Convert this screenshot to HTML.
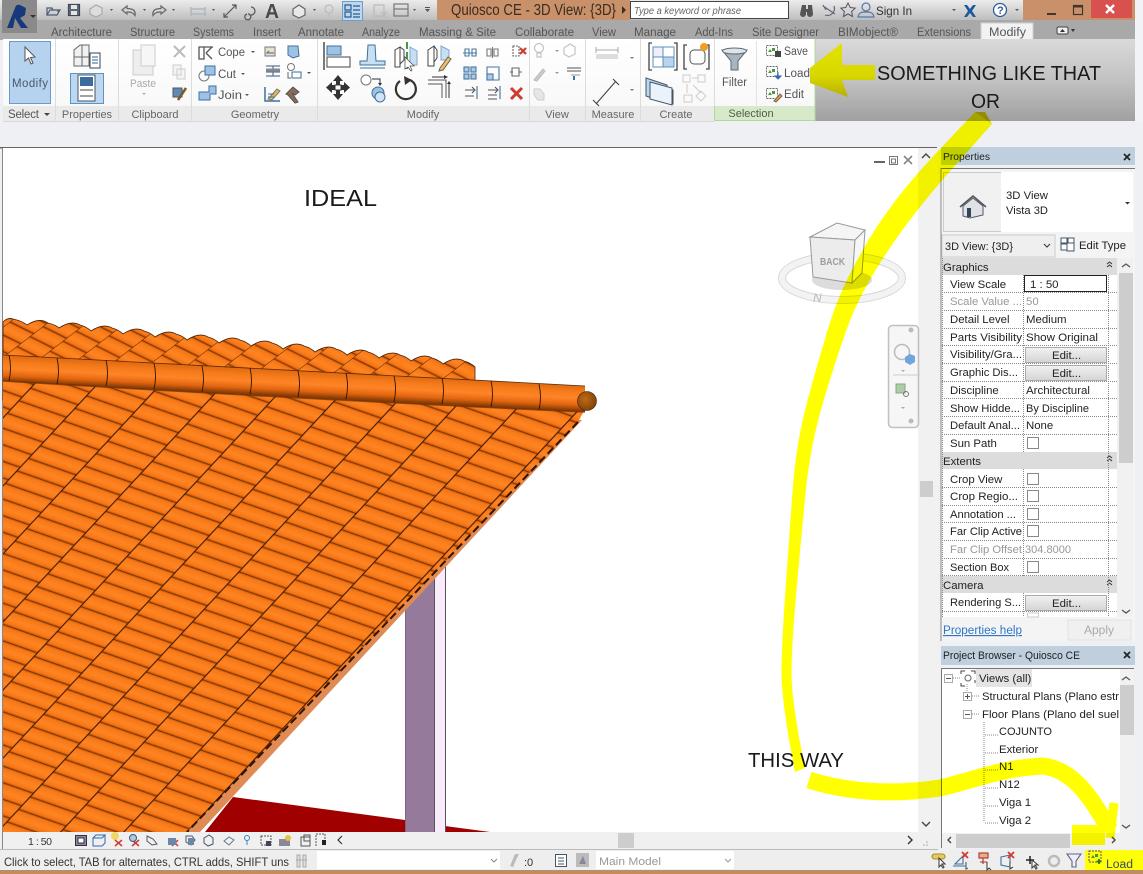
<!DOCTYPE html>
<html><head><meta charset="utf-8"><title>Quiosco CE - 3D View</title>
<style>
html,body{margin:0;padding:0;background:#fff}
body{width:1143px;height:874px;overflow:hidden}
svg{display:block;font-family:"Liberation Sans",sans-serif}
text{fill:#333;font-size:11px}
.t{fill:#555;font-size:11.5px}
.l{fill:#666;font-size:11px;text-anchor:middle}
.p{font-size:11.4px;fill:#222}
.g{fill:#999}
.big{font-size:20px;fill:#1a1a1a}
.ic{fill:none;stroke:#4b5d70;stroke-width:1.2}
.bl{fill:#9cc3e6;stroke:#3f6f9c;stroke-width:1}
.lg{fill:none;stroke:#c4c4c4;stroke-width:1.2}
.dot{stroke:#888;stroke-width:1;stroke-dasharray:1 1;fill:none}
</style></head><body>
<svg width="1143" height="874" viewBox="0 0 1143 874" xmlns="http://www.w3.org/2000/svg">
<defs>
<linearGradient id="tb" x1="0" y1="0" x2="0" y2="1"><stop offset="0" stop-color="#ececec"/><stop offset="1" stop-color="#b9b9b9"/></linearGradient>
<linearGradient id="rg" x1="0" y1="0" x2="0" y2="1"><stop offset="0" stop-color="#dadada"/><stop offset=".5" stop-color="#c2c2c2"/><stop offset="1" stop-color="#a0a0a0"/></linearGradient>
<linearGradient id="rb" x1="0" y1="0" x2="0" y2="1"><stop offset="0" stop-color="#ffffff"/><stop offset="1" stop-color="#f7f7f7"/></linearGradient>
<linearGradient id="ar" x1="0" y1="0" x2="0" y2="1"><stop offset="0" stop-color="#e2e200"/><stop offset=".6" stop-color="#d8d800"/><stop offset="1" stop-color="#b8b000"/></linearGradient>
<linearGradient id="btn" x1="0" y1="0" x2="0" y2="1"><stop offset="0" stop-color="#f2f2f2"/><stop offset="1" stop-color="#d4d4d4"/></linearGradient>
<linearGradient id="tileG" gradientUnits="userSpaceOnUse" x1="0" y1="0" x2="-47.4" y2="65.9" spreadMethod="repeat">
<stop offset="0" stop-color="#5a2a08"/><stop offset=".05" stop-color="#d9640e"/><stop offset=".14" stop-color="#f77716"/><stop offset=".55" stop-color="#ff8522"/><stop offset=".86" stop-color="#f77514"/><stop offset=".95" stop-color="#cc5a0a"/><stop offset="1" stop-color="#5a2a08"/>
</linearGradient>
<pattern id="tile" patternUnits="userSpaceOnUse" width="100" height="100" patternTransform="matrix(.56 .077 -.116 .125 287.3 451.7)">
<rect width="100" height="100" fill="url(#tileG)"/><rect width="1.200" height="100" fill="#3a1a08"/><rect x="98.800" width="1.200" height="100" fill="#3a1a08"/>
</pattern>
<pattern id="far" patternUnits="userSpaceOnUse" width="100" height="100" patternTransform="matrix(.33 .046 -.13 .1 10 322)">
<rect width="100" height="100" fill="url(#tileG)"/><rect width="1" height="100" fill="#4a2208"/><rect x="99" width="1" height="100" fill="#4a2208"/>
</pattern>
<linearGradient id="ridge" gradientUnits="userSpaceOnUse" x1="300" y1="369" x2="298.6" y2="396"><stop offset="0" stop-color="#d9640e"/><stop offset=".3" stop-color="#f47a1a"/><stop offset=".55" stop-color="#ff8426"/><stop offset=".8" stop-color="#e3660f"/><stop offset="1" stop-color="#8a3c06"/></linearGradient>
<radialGradient id="ball" cx=".4" cy=".4" r=".7"><stop offset="0" stop-color="#c06a14"/><stop offset="1" stop-color="#7a3e08"/></radialGradient>
</defs>

<!-- base -->
<rect width="1143" height="874" fill="#eef0f3"/>
<!-- title bar -->
<rect width="1135" height="22" fill="url(#tb)"/>
<rect x="437" y="0" width="193" height="20" fill="#c9916a"/>
<rect x="1023" y="0" width="112" height="20" fill="#c9916a"/>
<rect x="1091" y="0" width="41" height="18" fill="#d8514f"/>
<path d="M1106 5l8 8m0-8l-8 8" stroke="#fff" stroke-width="2.4"/>
<rect x="1047" y="13" width="9" height="2" fill="#40362e"/>
<rect x="1073.500" y="5.500" width="9" height="9" fill="none" stroke="#40362e" stroke-width="1.2"/><rect x="1073" y="5" width="10" height="2.500" fill="#40362e"/>
<!-- tabs band -->
<rect y="20" width="1135" height="20" fill="#a9a9a9"/>
<rect x="1135" width="8" height="130" fill="#f1f3f6"/>
<rect x="981" y="23" width="52" height="18" fill="#f2f2f2" stroke="#d0d0d0"/>
<!-- logo -->
<rect x="2" y="0" width="35" height="33" fill="#8a8a8a"/>
<path d="M7 28L15 8Q16 4 20 5L26 8 25 15 20 18 28 28H21L15 18 13 28z" fill="#17387a"/>
<path d="M30 15h6l-3 3z" fill="#333"/>
<!-- QAT -->
<g class="ic">
<path d="M47 15V8h5l1 2h5v2M47 15l3-5h10l-3 5z"/>
<rect x="68.500" y="4.500" width="11" height="11" fill="#5d6a78" stroke="#3d4855"/><rect x="71" y="5" width="6" height="4" fill="#e5e5e5" stroke="none"/><rect x="71" y="11" width="6" height="4" fill="#e5e5e5" stroke="none"/>
<path d="M90 9l6-4 6 3v6l-6 3-6-3z" stroke="#aaa" fill="#ddd"/>
<path d="M122 10l5-4v2.500c6 0 9 2 8 7-2-3-4-3.500-8-3.500V14z" stroke="#666"/>
<path d="M166 10l-5-4v2.500c-6 0-9 2-8 7 2-3 4-3.500 8-3.500V14z" stroke="#666"/>
<path d="M191 7v9M205 7v9M191 9h14M191 14h14" stroke="#a9b3bd"/>
<path d="M224 17l12-12M224 13v4h4M236 9V5h-4" stroke="#555"/>
<path d="M247 14a3 3 0 1 0 1-.1M251 7a4 4 0 1 1 0 8" stroke="#555"/>
<path d="M293 9l6-4 6 4v6l-6 3-6-3z" stroke="#666" fill="#e8e8e8"/>
<circle cx="329" cy="9" r="4" stroke="#bbb"/><path d="M329 13v4" stroke="#bbb"/>
<rect x="374" y="5" width="10" height="11" stroke="#bbb"/><path d="M381 12l6 6m0-6l-6 6" stroke="#bbb"/>
<rect x="394" y="4" width="14" height="12" stroke="#777"/><path d="M394 9h14" stroke="#777"/>
</g>
<rect x="342.500" y="1.500" width="20" height="19" fill="#bcd8f0" stroke="#6d9dc8"/>
<path d="M345 5h6v5h-6zM345 12h6v5h-6zM353 6h7M353 10h7M353 14h7M353 17h7" fill="none" stroke="#2d5c8a" stroke-width="1.200"/>
<text x="265" y="18" style="font-size:20px;font-weight:bold;fill:#4a4a4a" textLength="14" lengthAdjust="spacingAndGlyphs">A</text>
<g fill="#555"><path d="M110 9h3l-1.500 2zM143 9h3l-1.500 2zM172 9h3l-1.500 2zM212 9h3l-1.500 2zM313 9h3l-1.500 2zM413 9h3l-1.500 2zM425 7h5v1h-5zM425 9h5l-2.500 3z"/></g>
<text x="451" y="15" style="font-size:15.500px;fill:#3a2c20" textLength="165" lengthAdjust="spacingAndGlyphs">Quiosco CE - 3D View: {3D}</text>
<path d="M622 6l4 4-4 4z" fill="#332"/>
<rect x="630.500" y="1.500" width="158" height="17" fill="#fff" stroke="#444"/>
<text x="634" y="14" style="font-size:10px;font-style:italic;fill:#666" textLength="107" lengthAdjust="spacingAndGlyphs">Type a keyword or phrase</text>
<!-- right icons -->
<path d="M802 5h4v4h2V5h4l1 9a3 3 0 0 1-6 0v-2h-1v2a3 3 0 0 1-6 0z" fill="#555"/>
<path d="M823 6l12 8M825 15a7 7 0 0 0 9-9M823 5l3 5" fill="none" stroke="#667" stroke-width="1.200"/>
<path d="M848 3l2.200 4.500 5 .6-3.600 3.400 1 5-4.600-2.500-4.600 2.500 1-5-3.600-3.400 5-.6z" fill="none" stroke="#556" stroke-width="1"/>
<circle cx="866" cy="7" r="4" fill="none" stroke="#5577aa" stroke-width="1.200"/><path d="M858 17c1-5 4-5 8-5s7 0 8 5z" fill="none" stroke="#5577aa" stroke-width="1.200"/>
<text x="876" y="15" style="font-size:12px;fill:#333" textLength="36" lengthAdjust="spacingAndGlyphs">Sign In</text>
<path d="M952 9h4l-2 2z" fill="#555"/>
<path d="M964 5h3l3 4 3-4h3l-4 6 4 6h-3l-3-4-3 4h-3l4-6z" fill="#1d5a9c"/>
<circle cx="1000" cy="10" r="6.500" fill="#fff" stroke="#2c5e9c" stroke-width="1.300"/><text x="997" y="14" style="font-size:11px;font-weight:bold;fill:#2c5e9c">?</text>
<path d="M1015 9h4l-2 2z" fill="#555"/>
<rect x="1057" y="27" width="11" height="7" rx="1.500" fill="#eee" stroke="#444"/><path d="M1060 32l2.500-3 2.500 3z" fill="#333"/><path d="M1071 29h4l-2 3z" fill="#333"/>
<!-- tabs -->
<g>
<text class="t" x="51" y="36" textLength="61" lengthAdjust="spacingAndGlyphs">Architecture</text><text class="t" x="130" y="36" textLength="45" lengthAdjust="spacingAndGlyphs">Structure</text><text class="t" x="193" y="36" textLength="41" lengthAdjust="spacingAndGlyphs">Systems</text><text class="t" x="253" y="36" textLength="28" lengthAdjust="spacingAndGlyphs">Insert</text><text class="t" x="298" y="36" textLength="46" lengthAdjust="spacingAndGlyphs">Annotate</text><text class="t" x="362" y="36" textLength="38" lengthAdjust="spacingAndGlyphs">Analyze</text><text class="t" x="419" y="36" textLength="77" lengthAdjust="spacingAndGlyphs">Massing &amp; Site</text><text class="t" x="515" y="36" textLength="59" lengthAdjust="spacingAndGlyphs">Collaborate</text><text class="t" x="592" y="36" textLength="24" lengthAdjust="spacingAndGlyphs">View</text><text class="t" x="634" y="36" textLength="42" lengthAdjust="spacingAndGlyphs">Manage</text><text class="t" x="695" y="36" textLength="38" lengthAdjust="spacingAndGlyphs">Add-Ins</text><text class="t" x="752" y="36" textLength="67" lengthAdjust="spacingAndGlyphs">Site Designer</text><text class="t" x="838" y="36" textLength="60" lengthAdjust="spacingAndGlyphs">BIMobject®</text><text class="t" x="917" y="36" textLength="54" lengthAdjust="spacingAndGlyphs">Extensions</text><text class="t" x="989" y="36" textLength="37" lengthAdjust="spacingAndGlyphs">Modify</text>
</g>
<!-- ribbon -->
<rect x="815" y="39" width="320" height="82" fill="url(#rg)"/>
<rect x="3" y="39" width="812" height="82" fill="url(#rb)"/>
<rect x="3" y="106" width="711" height="15" fill="#eaeaea"/>
<rect x="714" y="106" width="101" height="15" fill="#d6e9c8"/>
<path d="M714.500 39v81.500h100.500V39" fill="none" stroke="#b6d69e"/>
<path d="M3 121.500h711" stroke="#d8d8d8"/>
<g stroke="#dcdcdc"><path d="M55.500 39v82M118.500 39v82M191.500 39v82M317.500 39v82M529.500 39v82M585.500 39v82M640.500 39v82M714.500 39v67"/></g>
<path d="M756.500 41v65" stroke="#e2e2e2"/>
<!-- modify button -->
<rect x="9.500" y="41.500" width="41" height="62" fill="#b5d3ef" stroke="#6b9cc9"/>
<path d="M25 47v14l3.500-3 2.500 6 2-1-2.500-5.500 4.500-.5z" fill="#fff" stroke="#555"/>
<text x="12" y="87" style="font-size:11.500px;fill:#4a5a68" textLength="36">Modify</text>
<!-- labels -->
<text x="8" y="118" class="t" textLength="31">Select</text><path d="M44 113h6l-3 3z" fill="#444"/>
<text class="l" x="87" y="118">Properties</text><text class="l" x="155" y="118">Clipboard</text><text class="l" x="255" y="118">Geometry</text><text class="l" x="423" y="118">Modify</text><text class="l" x="557" y="118">View</text><text class="l" x="613" y="118">Measure</text><text class="l" x="676" y="118">Create</text><text class="l" x="751" y="117" style="fill:#4f5f48">Selection</text>
<!-- properties icons -->
<g fill="#f1f1f1" stroke="#666" stroke-width="1"><path d="M74 50l6-5h9v21h-15z"/><path d="M74 57h15M82 45v21"/><rect x="90" y="53" width="10" height="15" fill="#fff" stroke="#345"/></g>
<path d="M92 57h6M92 60h6M92 63h6" stroke="#2d6090"/>
<rect x="70.500" y="73.500" width="33" height="30" fill="#bcd7ef" stroke="#5f93c2"/>
<rect x="78" y="75" width="17" height="26" fill="#fff" stroke="#456"/><rect x="80" y="77" width="13" height="9" fill="#3a6c9c"/><path d="M80 90h13M80 96h13" stroke="#444"/>
<!-- clipboard -->
<g fill="#eee" stroke="#ccc"><path d="M133 50h20v25h-20z"/><rect x="141" y="45" width="14" height="21" fill="#f6f6f6"/></g>
<text x="130" y="87" style="font-size:11px;fill:#aaa" textLength="26" lengthAdjust="spacingAndGlyphs">Paste</text><path d="M142 93h4l-2 2z" fill="#aaa"/>
<path d="M174 46l11 11M185 46l-11 11" stroke="#bbb" stroke-width="2"/>
<path d="M173 65h8v10h-8zM177 69h8v10h-8z" fill="#f4f4f4" stroke="#ccc"/>
<path d="M173 88h9v9h-9z" fill="#5f8ab5" stroke="#555"/><path d="M178 100l8-12" stroke="#7a5a30" stroke-width="2.500"/>
<!-- geometry -->
<g>
<path d="M199 47h5v12h-5zM201 47l12 0M206 53l6-6M206 53l6 6" fill="none" stroke="#555" stroke-width="1.300"/>
<text x="218" y="56" class="t" textLength="27" lengthAdjust="spacingAndGlyphs">Cope</text><text x="218" y="78" class="t" textLength="18" lengthAdjust="spacingAndGlyphs">Cut</text><text x="218" y="99" class="t" textLength="24" lengthAdjust="spacingAndGlyphs">Join</text>
<path d="M251 51h4l-2 2zM241 73h4l-2 2zM245 94h4l-2 2z" fill="#555"/>
<circle cx="204" cy="76" r="5" fill="none" stroke="#777"/><rect x="205" y="66" width="10" height="9" class="bl"/>
<path d="M199 92h10v-6h7v8h-6v6h-11z" class="bl"/>
<path d="M265 47h10v9h-10z" fill="#e8e1c8" stroke="#777"/><path d="M274 53h-7l2-2" stroke="#3a6c9c" fill="none"/>
<path d="M288 46h10l1 10-6 2-5-3z" class="bl"/>
<path d="M266 66h14M266 72h14M266 76h14M273 66v10" stroke="#5a7a9a" stroke-width="1.300"/><path d="M266 70h14" stroke="#888" stroke-width="3"/>
<circle cx="291" cy="67" r="3.500" fill="none" stroke="#777"/><rect x="292" y="72" width="9" height="6" fill="none" stroke="#3f6f9c"/><path d="M288 72v6h3" fill="none" stroke="#666"/><path d="M307 72h4l-2 2z" fill="#555"/>
<path d="M265 87v14h15" fill="none" stroke="#3f6f9c" stroke-width="1.500"/><path d="M268 99l9-10 3 2-8 9z" fill="#e5b94f" stroke="#777"/><path d="M268 94h6M268 97h6" stroke="#3f6f9c"/>
<path d="M286 94l7-7 6 5-4 3-3-2 6 9-3 1-7-8z" fill="#8a6a55" stroke="#555"/>
</g>
<!-- modify big icons -->
<g>
<path d="M324 42v28" stroke="#333" stroke-width="1.300"/><rect x="327" y="46" width="14" height="9" class="bl"/><rect x="327" y="57" width="23" height="10" fill="#fff" stroke="#444"/>
<path d="M360 65h25v-4h-9l-1-16h-7l-1 16h-7z" fill="#c7dff2" stroke="#3f6f9c"/><path d="M360 68h25" stroke="#3f6f9c"/>
<path d="M395 50l5-3v20h-5zM400 47l4 3v10l-4 4" fill="#fff" stroke="#444"/><path d="M407 42v30" stroke="#4a9a3c" stroke-width="2" stroke-dasharray="7 3"/><path d="M410 47l7 4v14h-7z" fill="#c7dff2" stroke="#7ea6c8"/><path d="M405 57v12l3-2 3 4 1-1-2-4h4z" fill="#fff" stroke="#555" stroke-width=".8"/>
<path d="M428 50l6-4v20h-6zM434 46l3 4v8l-3 4" fill="#fff" stroke="#444"/><path d="M441 46l8 4v10h-8z" fill="#c7dff2" stroke="#7ea6c8"/><path d="M440 68l8-11 3 2-8 11-4 1z" fill="#f0c060" stroke="#665"/>
<path d="M338 75l5 6h-3v4h4v-3l6 5.500-6 5.500v-3h-4v4h3l-5 6-5-6h3v-4h-4v3l-6-5.500 6-5.500v3h4v-4h-3z" fill="#333"/><rect x="335" y="85" width="6" height="5" fill="#fff" stroke="#333"/>
<circle cx="366" cy="80" r="5" fill="#fff" stroke="#777"/><circle cx="378" cy="93" r="6" class="bl"/><circle cx="380" cy="97" r="5" fill="#cfe3f4" stroke="#3f6f9c"/><path d="M372 79h8v5" fill="none" stroke="#333"/><path d="M378 83h4l-2 3z" fill="#333"/>
<path d="M400 81a10 10 0 1 0 10-1" fill="none" stroke="#333" stroke-width="2.200"/><path d="M404 76l8 4-7 5z" fill="#333"/>
<path d="M428 80h18v18M428 84h14v14" fill="none" stroke="#555"/><path d="M432 77h12M449 98V84" stroke="#333"/><path d="M444 75l4 2-4 2zM447 84l2-3 2 3z" fill="#333"/>
</g>
<!-- modify small -->
<g stroke="#4a76a0" fill="none" stroke-width="1.100">
<path d="M465 49h4v7h-4zM472 49h4v7h-4zM463 53h14"/><path d="M487 49h4v7h-4zM494 49h4v7h-4zM492.500 47v11" stroke="#777"/>
<path d="M513 46h6v10h-6z" stroke="#666" stroke-dasharray="2 1"/>
<rect x="464" y="67" width="5" height="5" fill="#a9cbe8"/><rect x="471" y="67" width="5" height="5" fill="#a9cbe8"/><rect x="464" y="74" width="5" height="5" fill="#a9cbe8"/><rect x="471" y="74" width="5" height="5" fill="#a9cbe8"/>
<path d="M487 67h12v13h-12z"/><rect x="487" y="74" width="6" height="6" fill="#a9cbe8"/>
<path d="M512 68h7v8h-7z" stroke="#666"/><path d="M510 72h3M519 72h3" stroke="#666"/>
<path d="M465 90h9M465 96h9M472 87l3 3-3 3" stroke="#555"/><path d="M477 86v13" stroke="#3f6f9c"/>
<path d="M488 90h9M488 95h9M488 99h9M495 87l3 3-3 3" stroke="#555"/><path d="M500 86v13" stroke="#3f6f9c"/>
</g>
<path d="M520 48l6 6m0-6l-6 6" stroke="#d03b30" stroke-width="2.200"/>
<path d="M511 88l11 11m0-11l-11 11" stroke="#d03b30" stroke-width="3"/>
<!-- view panel -->
<g class="lg"><circle cx="539" cy="48" r="4.500"/><path d="M537 53h4v4h-4z"/><path d="M564 48l6-4 5 3v7l-6 3-5-3z"/></g><path d="M555 50h4l-2 2zM555 72h4l-2 2z" fill="#999"/>
<path d="M534 80l9-11 2 2-8 10z" fill="#ccc" stroke="#bbb"/>
<path d="M567 68h14M567 71h14" stroke="#555"/><path d="M571 75h9" stroke="#999"/><path d="M574 76v4" stroke="#3f6f9c" stroke-width="2"/>
<path d="M534 89h6l4 5v6h-6l-4-5z" fill="#e6e6e6" stroke="#ccc"/>
<!-- measure -->
<path d="M596 50h22M596 47v6M618 47v6" stroke="#aaa"/><rect x="596" y="54" width="22" height="5" fill="#ddd"/><path d="M630 57h4l-2 2z" fill="#777"/>
<path d="M596 104l20-23M593 100l6 6M613 79l6 6" stroke="#444" stroke-width="1.100"/><path d="M630 89h4l-2 2z" fill="#777"/>
<!-- create -->
<g fill="none" stroke="#444" stroke-width="1.300"><path d="M652 43h-3v27h3M674 43h3v27h-3"/><path d="M687 45h-3v24h3M706 45h3v24h-3"/></g>
<rect x="653" y="47" width="21" height="20" fill="#fff" stroke="#5f8fb8"/><rect x="653" y="47" width="10" height="10" fill="#eef" stroke="#5f8fb8"/><rect x="663" y="57" width="11" height="10" fill="#b9d5ee" stroke="#5f8fb8"/>
<rect x="690" y="50" width="15" height="14" rx="4" fill="#fff" stroke="#555"/><circle cx="704" cy="47" r="4" fill="#f0a020"/>
<path d="M646 78l21 7v18l-21-7z" fill="#bcd7ef" stroke="#456"/><path d="M651 84l22 6v14l-22-6z" fill="#d8e9f7" stroke="#456"/><path d="M650 82l22 6v17l-22-6z" fill="#eaf3fb" stroke="#456"/>
<g fill="none" stroke="#ccc"><rect x="683" y="75" width="7" height="7"/><rect x="698" y="75" width="7" height="7"/><rect x="684" y="95" width="8" height="7"/><path d="M692 78h6M687 84v9M693 85l8 8"/><path d="M701 91l5 5-5 5-5-5z"/></g>
<!-- selection -->
<path d="M722 50h25l-9 11v9l-7 0v-9z" fill="#a9b6be" stroke="#5c6a74"/><ellipse cx="734.500" cy="51" rx="12" ry="3" fill="#dfe5e9" stroke="#5c6a74"/>
<text x="722" y="86" class="t" textLength="25" lengthAdjust="spacingAndGlyphs">Filter</text>
<g fill="none" stroke="#666" stroke-dasharray="2 1"><rect x="766.500" y="45.500" width="11" height="10"/><rect x="766.500" y="66.500" width="11" height="10"/><rect x="766.500" y="88.500" width="11" height="10"/></g>
<path d="M768 52l2-3 2 3zM772 48h3v3h-3zM768 73l2-3 2 3zM772 69h3v3h-3zM768 95l2-3 2 3zM772 91h3v3h-3z" fill="#4a9a3c"/>
<rect x="775" y="51" width="6" height="6" fill="#444"/><path d="M778 72v4M775 76h6l-3 3z" fill="#2d6ab0" stroke="#2d6ab0"/><path d="M774 101l6-7 2 2-6 6z" fill="#e8a030" stroke="#765"/>
<text x="784" y="55" class="t" textLength="24" lengthAdjust="spacingAndGlyphs">Save</text><text x="784" y="77" class="t" textLength="26" lengthAdjust="spacingAndGlyphs">Load</text><text x="784" y="98" class="t" textLength="20" lengthAdjust="spacingAndGlyphs">Edit</text>
<!-- ribbon notes -->
<path d="M810 68L842 43V65H875V80H842L848 97L810 83z" fill="url(#ar)"/>
<text x="877" y="80" class="big" textLength="224" lengthAdjust="spacingAndGlyphs">SOMETHING LIKE THAT</text>
<text x="971" y="108" class="big" textLength="29" lengthAdjust="spacingAndGlyphs">OR</text>

<!-- lower bg -->
<rect y="122" width="1143" height="26" fill="#eef0f3"/>
<rect y="147" width="937" height="1.500" fill="#666"/>
<!-- viewport -->
<rect x="3" y="148" width="915" height="684" fill="#fff"/>
<path d="M2.500 148v702" stroke="#888"/>
<rect x="918" y="148" width="20" height="700" fill="#f1f1f1"/>
<rect x="920" y="481" width="13" height="16" fill="#cdcdcd"/>
<path d="M922 158l4-4 4 4M922 822l4 4 4-4" fill="none" stroke="#444" stroke-width="1.400"/>
<path d="M874 162h11" stroke="#666" stroke-width="2"/><rect x="889.500" y="156.500" width="8" height="8" fill="none" stroke="#777"/><rect x="891.500" y="159" width="4" height="4" fill="none" stroke="#777"/><path d="M904 156l8 8m0-8l-8 8" stroke="#888" stroke-width="1.600"/>
<text x="304" y="206" style="font-size:23px;fill:#1a1a1a" textLength="73" lengthAdjust="spacingAndGlyphs">IDEAL</text>
<!-- red floor + column -->
<path d="M233 797L405 820V832H205z" fill="#a10000"/><path d="M445 826L490 832H445z" fill="#a10000"/>
<rect x="405" y="560" width="29" height="272" fill="#957a9c"/><rect x="434" y="560" width="11" height="272" fill="#f9eafc"/>
<path d="M434.500 560v272M445.500 560v272" stroke="#555" stroke-width="1"/><path d="M405.500 600v232" stroke="#7c6484"/>
<!-- far slope -->
<path d="M3 400V322q5-5 10-3 9 2 14 6 12-8 21-2 8 2 11 5q12-8 21-3 7 2 11 6 12-8 21-3 7 2 11 6 12-8 21-3 7 2 11 6 12-8 21-3 7 2 11 6 12-8 21-3 7 2 11 6 12-8 21-3 7 2 11 6 12-8 21-3 7 2 11 6 12-8 21-3 7 2 11 6 12-8 21-3 7 2 11 6 12-8 21-3 7 2 11 6 12-8 21-3 7 2 11 6 12-8 21-3 7 2 11 6 12-8 21-3 7 2 11 6V400z" fill="url(#far)" stroke="#4a2208" stroke-width=".8"/>
<!-- main roof -->
<path d="M582 420L200 832H187L578 420z" fill="#e08a54"/>
<path d="M3 368L590 400 578 422 187 832H3z" fill="url(#tile)"/>
<path d="M578 422L187 832" fill="none" stroke="#2e1408" stroke-width="2" stroke-dasharray="8 4"/>
<!-- ridge -->
<path d="M3 355L585 386V412Q300 399 3 381z" fill="url(#ridge)"/>
<path d="M3 355L585 386" stroke="#5a2a08" stroke-width=".8" fill="none"/>
<path d="M3 381Q300 399 585 412" stroke="#6a3006" stroke-width="1.600" fill="none" opacity=".7"/>
<g fill="none" stroke="#2e1506" stroke-width=".9">
<path d="M9 355q3 13 0 26M57 358q3 13 0 26M106 360q3 13 0 26M154 363q3 13 0 26M202 366q3 13 0 26M250 368q3 13 0 26M298 371q3 13 0 26M346 373q3 13 0 26M394 376q3 13 0 26M442 378q3 13 0 26M491 381q3 13 0 26M539 384q3 13 0 26"/></g>
<circle cx="587" cy="401" r="9.500" fill="url(#ball)" stroke="#3e1e06" stroke-width=".6"/>
<!-- view cube -->
<ellipse cx="842" cy="278" rx="60" ry="22" fill="none" stroke="#d8d8d8" stroke-width="8"/>
<ellipse cx="842" cy="278" rx="60" ry="22" fill="none" stroke="#f3f3f3" stroke-width="6"/>
<ellipse cx="842" cy="280" rx="30" ry="10" fill="#dcdcdc"/>
<path d="M810 237L837 223 865 230 855 240z" fill="#f5f5f5" stroke="#999"/><path d="M810 237L855 240 852 283 813 277z" fill="#ececec" stroke="#999"/><path d="M855 240L865 230 862 273 852 283z" fill="#f7f7f7" stroke="#999"/>
<text x="820" y="265" style="font-size:10px;font-weight:bold;fill:#9c9c9c" textLength="25" lengthAdjust="spacingAndGlyphs">BACK</text>
<text x="813" y="302" style="font-size:12px;font-style:italic;fill:#bbb">N</text>
<!-- nav bar -->
<rect x="888.500" y="325.500" width="30" height="102" rx="4" fill="#f6f6f6" stroke="#c0c0c0" stroke-width="1.500"/>
<circle cx="911" cy="330" r="2.500" fill="#bbb"/><circle cx="911" cy="421" r="2.500" fill="#bbb"/>
<circle cx="902" cy="352" r="7.500" fill="none" stroke="#bbb" stroke-width="1.500"/><path d="M905 357l5-3 5 2v6l-5 3-5-3z" fill="#72a5dc"/>
<path d="M901 370h4l-2 2zM901 407h4l-2 2z" fill="#aaa"/><path d="M893 375h27" stroke="#ccc"/>
<rect x="896" y="384" width="9" height="9" fill="#a9d0a0" stroke="#999"/><circle cx="906" cy="394" r="2.500" fill="none" stroke="#777"/>

<!-- THIS WAY + view bar -->
<text x="748" y="767" class="big" textLength="96" lengthAdjust="spacingAndGlyphs">THIS WAY</text>
<rect x="3" y="832" width="935" height="18" fill="#f0f0f0"/>
<rect x="618" y="833" width="16" height="15" fill="#cdcdcd"/>
<text x="28" y="845" style="font-size:10.500px;fill:#333" textLength="24">1 : 50</text>
<g stroke="#334" fill="none">
<rect x="75.500" y="835.500" width="11" height="10" fill="#889"/><rect x="78" y="838" width="6" height="5" fill="#fff"/>
<path d="M93 838h9l3-3v8l-3 3h-9zM93 838l3-3h9" stroke="#2d6ab0"/>
</g>
<circle cx="115" cy="836" r="4" fill="#f0d860"/><path d="M115 840l7 6m0-6l-7 6M132 840l7 6m0-6l-7 6M172 840l6 6m0-6l-6 6" stroke="#d03b30" stroke-width="1.500"/>
<circle cx="133" cy="838" r="3.500" fill="#aac8e8" stroke="#456"/>
<path d="M147 836l6 3 4 5-5 1-5-4zM186 836l6 0 3 4-4 5-5-3z" fill="none" stroke="#556"/>
<path d="M168 838h8v7h-8z" fill="#6a86a8"/><path d="M188 838h6v7h-6z" fill="#6a86a8"/>
<path d="M204 838l5-3 4 3v6l-5 2-4-3z" fill="none" stroke="#456"/>
<path d="M224 841l5-4 5 3-5 5z" fill="none" stroke="#678"/>
<circle cx="247" cy="838" r="2.500" fill="none" stroke="#3a82c0"/><path d="M247 841v4" stroke="#3a82c0"/>
<path d="M261 836h10v9h-10z" fill="none" stroke="#555" stroke-dasharray="2 1"/><rect x="266" y="841" width="5" height="5" fill="#445"/>
<path d="M279 839h11v7h-11z" fill="#889"/><circle cx="288" cy="838" r="3" fill="#e8c040"/>
<rect x="301" y="837" width="9" height="9" fill="none" stroke="#555"/><rect x="304" y="835" width="6" height="6" fill="none" stroke="#555"/>
<path d="M316 846v-12h9v12" fill="none" stroke="#555" stroke-dasharray="2 1"/><rect x="322" y="840" width="4" height="5" fill="#222"/>
<path d="M342 836l-4 4 4 4" fill="none" stroke="#333" stroke-width="1.200"/>
<circle cx="924" cy="845" r=".8" fill="#aaa"/><circle cx="927" cy="842" r=".8" fill="#aaa"/><circle cx="927" cy="845" r=".8" fill="#aaa"/>
<path d="M908 836l4 4-4 4" fill="none" stroke="#333" stroke-width="1.400"/>

<!-- status bar -->
<rect y="850" width="1143" height="20" fill="#eeeeee"/><path d="M0 849.500h1143" stroke="#bbb"/>
<rect y="870" width="1143" height="4" fill="#c08c62"/>
<text x="4" y="866" style="font-size:12px;fill:#333" textLength="285" lengthAdjust="spacingAndGlyphs">Click to select, TAB for alternates, CTRL adds, SHIFT uns</text>
<path d="M297 855h3v12h-3zM303 855h3v12h-3zM296 860h11" stroke="#aaa" fill="#ddd"/>
<rect x="317" y="851" width="183" height="18" fill="#fff"/><path d="M491 859l3 3 3-3" fill="none" stroke="#888"/>
<path d="M510 866l5-12h4l-3 6-3 7z" fill="#bbb"/><text x="524" y="866" style="font-size:11px;fill:#333">:0</text>
<rect x="555.500" y="854.500" width="11" height="12" fill="#fff" stroke="#456"/><path d="M558 858h6M558 861h6M558 864h6" stroke="#456"/>
<rect x="576" y="853" width="13" height="14" fill="#bbb"/><path d="M579 864l4-8 3 8z" fill="#889"/>
<rect x="596" y="851" width="138" height="18" fill="#fff"/><text x="599" y="865" style="font-size:11px;fill:#999" textLength="62" lengthAdjust="spacingAndGlyphs">Main Model</text><path d="M725 859l3 3 3-3" fill="none" stroke="#999"/>
<!-- status right icons -->
<g stroke-width="1.100">
<rect x="932" y="854" width="13" height="5" rx="2.500" fill="#e8c860" stroke="#a78a30"/><path d="M939 858v9l2-2 2 3 1-1-2-3h3z" fill="#fff" stroke="#444"/>
<path d="M955 864l8-8v8z M953 866h14" fill="none" stroke="#3f6f9c"/><path d="M962 852l6 6m0-6l-6 6" stroke="#d03b30" stroke-width="1.800"/><path d="M966 862v7l2-1" stroke="#555" fill="#fff"/>
<rect x="979" y="853" width="9" height="5" fill="#e8b080" stroke="#a33"/><path d="M983 858v6M980 862h7" stroke="#a33"/><path d="M987 862v8l2-2 2 2" fill="#fff" stroke="#444"/>
<path d="M1001 857l9-2v12l-9-2z" fill="none" stroke="#3f6f9c"/><path d="M1008 852l6 6m0-6l-6 6" stroke="#d03b30" stroke-width="1.800"/><path d="M1010 862v7l3-2" fill="#fff" stroke="#444"/>
<path d="M1030 856v8M1026 860h8" stroke="#222" stroke-width="1.500"/><path d="M1032 860v8l2-2 2 3 1-1-2-3h3z" fill="#fff" stroke="#444"/>
<circle cx="1054" cy="861" r="5" fill="none" stroke="#bbb" stroke-width="2.500"/>
<path d="M1067 854h14l-5 7v6h-4v-6z" fill="#eef" stroke="#667"/>
</g>
<rect x="1085" y="846" width="58" height="24" fill="#ffff0a"/>
<rect x="1089" y="851" width="12" height="11" fill="none" stroke="#555" stroke-dasharray="2 1"/><path d="M1091 858l2-3 2 3zM1095 854h3v3h-3z" fill="#4a9a3c"/><path d="M1099 859v5M1096.500 861.500h5" stroke="#267a2a" stroke-width="1.800"/>
<text x="1106" y="868" style="font-size:11.500px;fill:#3d4a5a" textLength="27" lengthAdjust="spacingAndGlyphs">Load</text>

<!-- properties panel -->
<rect x="938" y="147" width="205" height="703" fill="#eef0f3"/>
<rect x="941" y="147" width="194" height="18" fill="#bfcfde"/>
<text x="943" y="160" style="font-size:10.500px;fill:#222" textLength="47" lengthAdjust="spacingAndGlyphs">Properties</text>
<path d="M1124 154l6 6m0-6l-6 6" stroke="#222" stroke-width="1.700"/>
<rect x="941" y="168" width="194" height="473" fill="#f4f4f4"/>
<path d="M941 168.500h194" stroke="#777"/><path d="M941 168v473" stroke="#888"/>
<rect x="943.500" y="172.500" width="58" height="59" fill="#f1f1f1" stroke="#ccc"/>
<rect x="1001" y="172" width="132" height="60" fill="#fff"/>
<path d="M960 207l13-11 13 11" fill="none" stroke="#555" stroke-width="1.500"/><path d="M963 206v10l7 2 13-3v-9l-10-8z" fill="#dfe3e6" stroke="#556"/><rect x="967" y="208" width="4" height="9" fill="#345"/>
<text x="1006" y="199" class="p" textLength="42" lengthAdjust="spacingAndGlyphs">3D View</text><text x="1006" y="214" class="p" textLength="42" lengthAdjust="spacingAndGlyphs">Vista 3D</text>
<path d="M1125 202h5l-2.500 2.500z" fill="#333"/>
<rect x="942" y="235" width="113" height="22" fill="#efefef" stroke="#ccc"/><text x="945" y="250" class="p" textLength="68" lengthAdjust="spacingAndGlyphs">3D View: {3D}</text>
<path d="M1044 244l3 3 3-3" fill="none" stroke="#444" stroke-width="1.200"/>
<g fill="#fff" stroke="#456"><rect x="1061" y="238" width="6" height="5"/><rect x="1068" y="238" width="6" height="5"/><rect x="1061" y="244" width="6" height="6"/><rect x="1067" y="243" width="7" height="8"/></g>
<text x="1079" y="249" class="p" textLength="47" lengthAdjust="spacingAndGlyphs">Edit Type</text>
<rect x="942" y="258" width="175" height="359" fill="#fff"/>
<!-- scrollbar -->
<rect x="1117" y="258" width="16" height="359" fill="#f1f1f1"/><rect x="1119" y="273" width="14" height="190" fill="#cdcdcd"/>
<path d="M1122 267l4-3 4 3M1122 610l4 3 4-3" fill="none" stroke="#555" stroke-width="1.300"/>
<!-- section headers -->
<rect x="942" y="258" width="175" height="17" fill="#dcdcdc"/><rect x="942" y="452" width="175" height="17" fill="#dcdcdc"/><rect x="942" y="576" width="175" height="17" fill="#dcdcdc"/>
<text x="943" y="271" class="p">Graphics</text><text x="943" y="465" class="p">Extents</text><text x="943" y="589" class="p">Camera</text>
<path d="M1107 264l2.500-2 2.500 2M1107 267l2.500-2 2.500 2M1107 458l2.500-2 2.500 2M1107 461l2.500-2 2.500 2M1107 582l2.500-2 2.500 2M1107 585l2.500-2 2.500 2" fill="none" stroke="#333"/>
<!-- grid -->
<g class="dot"><path d="M942 292.500h175M942 310.500h175M942 328.500h175M942 345.500h175M942 363.500h175M942 381.500h175M942 398.500h175M942 416.500h175M942 434.500h175M942 487.500h175M942 505.500h175M942 522.500h175M942 540.500h175M942 558.500h175M942 575.500h175M942 611.500h175"/><path d="M1023.500 275v177M1023.500 469v107M1023.500 593v24M1108.500 275v342M942.500 258v360"/></g>
<!-- rows -->
<g>
<text class="p" x="950" y="288">View Scale</text><text class="p g" x="950" y="305" textLength="72" lengthAdjust="spacingAndGlyphs">Scale Value ...</text><text class="p g" x="1026" y="305">50</text>
<text class="p" x="950" y="323">Detail Level</text><text class="p" x="1026" y="323">Medium</text>
<text class="p" x="950" y="341" textLength="72" lengthAdjust="spacingAndGlyphs">Parts Visibility</text><text class="p" x="1026" y="341" textLength="72" lengthAdjust="spacingAndGlyphs">Show Original</text>
<text class="p" x="950" y="358" textLength="72" lengthAdjust="spacingAndGlyphs">Visibility/Gra...</text>
<text class="p" x="950" y="376" textLength="68" lengthAdjust="spacingAndGlyphs">Graphic Dis...</text>
<text class="p" x="950" y="394">Discipline</text><text class="p" x="1026" y="394" textLength="64" lengthAdjust="spacingAndGlyphs">Architectural</text>
<text class="p" x="950" y="412" textLength="70" lengthAdjust="spacingAndGlyphs">Show Hidde...</text><text class="p" x="1026" y="412" textLength="63" lengthAdjust="spacingAndGlyphs">By Discipline</text>
<text class="p" x="950" y="429" textLength="70" lengthAdjust="spacingAndGlyphs">Default Anal...</text><text class="p" x="1026" y="429">None</text>
<text class="p" x="950" y="447">Sun Path</text>
<text class="p" x="950" y="483">Crop View</text><text class="p" x="950" y="500" textLength="68" lengthAdjust="spacingAndGlyphs">Crop Regio...</text><text class="p" x="950" y="518" textLength="66" lengthAdjust="spacingAndGlyphs">Annotation ...</text><text class="p" x="950" y="535" textLength="72" lengthAdjust="spacingAndGlyphs">Far Clip Active</text>
<text class="p g" x="950" y="553" textLength="72" lengthAdjust="spacingAndGlyphs">Far Clip Offset</text><text class="p g" x="1025" y="553" textLength="46" lengthAdjust="spacingAndGlyphs">304.8000</text>
<text class="p" x="950" y="571" textLength="59" lengthAdjust="spacingAndGlyphs">Section Box</text><text class="p" x="950" y="606" textLength="71" lengthAdjust="spacingAndGlyphs">Rendering S...</text>
</g>
<rect x="1024.500" y="275.500" width="82" height="16" fill="#fff" stroke="#222"/>
<text x="1030" y="288" class="p">1 : 50</text>
<g fill="url(#btn)" stroke="#aaa"><rect x="1025.500" y="347.500" width="81" height="15"/><rect x="1025.500" y="365.500" width="81" height="15"/><rect x="1025.500" y="595.500" width="81" height="15"/></g>
<text x="1052" y="359" class="p">Edit...</text><text x="1052" y="377" class="p">Edit...</text><text x="1052" y="607" class="p">Edit...</text>
<g fill="#fff" stroke="#888"><rect x="1027.500" y="437.500" width="11" height="11"/><rect x="1027.500" y="473.500" width="11" height="11"/><rect x="1027.500" y="490.500" width="11" height="11"/><rect x="1027.500" y="508.500" width="11" height="11"/><rect x="1027.500" y="525.500" width="11" height="11"/><rect x="1027.500" y="561.500" width="11" height="11"/><rect x="1027.500" y="613" width="11" height="4" stroke="#ccc"/></g>
<text x="943" y="634" style="font-size:11.500px;fill:#2c78c8;text-decoration:underline" textLength="79" lengthAdjust="spacingAndGlyphs">Properties help</text>
<rect x="1068" y="620" width="63" height="20" fill="#f0f0f0" stroke="#e2e2e2"/><text x="1084" y="634" style="font-size:11.500px;fill:#aaa" textLength="30" lengthAdjust="spacingAndGlyphs">Apply</text>

<!-- project browser -->
<rect x="941" y="646" width="194" height="19" fill="#bfcfde"/>
<text x="943" y="659" style="font-size:10.800px;fill:#222" textLength="137" lengthAdjust="spacingAndGlyphs">Project Browser - Quiosco CE</text>
<path d="M1124 652l6 6m0-6l-6 6" stroke="#222" stroke-width="1.700"/>
<rect x="941" y="668" width="193" height="180" fill="#fff"/>
<path d="M941 668.500h193M941.500 668v180" stroke="#777"/>
<rect x="1120" y="669" width="14" height="164" fill="#f1f1f1"/><rect x="1120" y="685" width="14" height="50" fill="#cdcdcd"/>
<path d="M1122 680l4-3 4 3M1122 825l4 3 4-3" fill="none" stroke="#555" stroke-width="1.300"/>
<rect x="942" y="833" width="192" height="15" fill="#f1f1f1"/><rect x="956" y="834" width="114" height="14" fill="#cdcdcd"/>
<path d="M951 837l-3 3 3 3M1112 837l3 3-3 3" fill="none" stroke="#444" stroke-width="1.400"/>
<rect x="976" y="669" width="56" height="18" fill="#e4e4e4"/>
<g class="dot"><path d="M953 678h8M970 696h10M970 714h10M984 722v99M985 735h13M985 753h13M985 770h13M985 788h13M985 806h13M985 823h13M967 684v7"/></g>
<g fill="#fff" stroke="#aaa"><rect x="944.500" y="674.500" width="8" height="8"/><rect x="963.500" y="692.500" width="8" height="8"/><rect x="963.500" y="710.500" width="8" height="8"/></g>
<path d="M946 678.500h5M965 696.500h5M967.500 694v5M965 714.500h5" stroke="#555"/>
<path d="M961 674v-3h4M975 674v-3h-4M961 683v3h4M975 683v-3" fill="none" stroke="#444"/><circle cx="968" cy="678" r="3" fill="none" stroke="#666"/>
<text x="979" y="682" class="p">Views (all)</text>
<svg x="982" y="688" width="137" height="36"><text x="0" y="12" class="p" textLength="137" lengthAdjust="spacingAndGlyphs">Structural Plans (Plano estr</text><text x="0" y="30" class="p" textLength="137" lengthAdjust="spacingAndGlyphs">Floor Plans (Plano del suel</text></svg>
<text x="999" y="735" class="p" textLength="53" lengthAdjust="spacingAndGlyphs">COJUNTO</text><text x="999" y="753" class="p">Exterior</text><text x="999" y="770" class="p">N1</text><text x="999" y="788" class="p">N12</text><text x="999" y="806" class="p">Viga 1</text><text x="999" y="824" class="p">Viga 2</text>

<!-- yellow hand-drawn line -->
<g style="mix-blend-mode:multiply">
<path d="M975 112L933.500 156Q892 200 866.500 243.500Q841 287 830 322.500Q819 358 807.500 400.500Q796 443 792.500 491.500Q789 540 785.500 590Q782 640 781.500 670Q781 700 795 772L805 768Q791 700 791.500 670Q792 640 796.500 590Q801 540 805.500 493.500Q810 447 822.500 404.500Q835 362 847 328.500Q859 295 885.500 254.500Q912 214 952 169L992 124z" fill="#ffff00"/>
<path d="M985 112l7 12-17-12z" fill="#e2d800"/>
<g fill="none" stroke="#ffff00">
<path d="M809 780C850 793 893 795 940 788C975 780 1000 768 1043 766C1075 770 1092 800 1110 830" stroke-width="17"/>
<path d="M1072 835H1105" stroke-width="20"/><path d="M1110 838L1114 803" stroke-width="9"/>
</g>
</g>
</svg>
</body></html>
